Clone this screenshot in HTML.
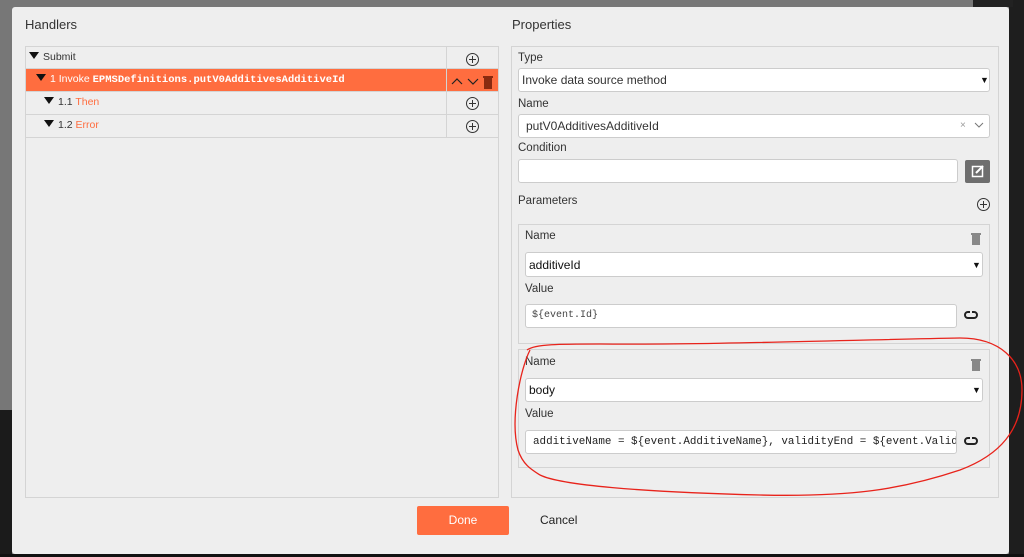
<!DOCTYPE html>
<html><head><style>
*{box-sizing:border-box;margin:0;padding:0}
body{width:1024px;height:557px;overflow:hidden;background:#777;font-family:"Liberation Sans",sans-serif;position:relative;font-size:12px;color:#333}
.abs{position:absolute}
.dlg{left:12px;top:7px;width:997px;height:547px;background:#eee;border-radius:3px}
.box{border:1px solid #d4d4d4}
.inp{background:#fff;border:1px solid #ccc;border-radius:3px}
.lbl{font-size:11.5px;color:#333}
.mono{font-family:"Liberation Mono",monospace}
.tri{display:inline-block;width:0;height:0;border-left:5px solid transparent;border-right:5px solid transparent;border-top:7px solid #111;margin-right:4px;vertical-align:1px}
.plus{width:13px;height:13px;border:1px solid #333;border-radius:50%}
.plus:before{content:"";position:absolute;left:2px;top:5px;width:7px;height:1px;background:#333}
.plus:after{content:"";position:absolute;left:5px;top:2px;width:1px;height:7px;background:#333}
.dd{font-size:9px;color:#111}
</style></head><body>
<div class="abs" style="left:0;top:410px;width:12px;height:147px;background:#1b1b1b"></div>
<div class="abs" style="left:1009px;top:0;width:15px;height:557px;background:#1e1e1e"></div>
<div class="abs" style="left:973px;top:0;width:40px;height:7px;background:#222"></div>
<div class="abs" style="left:0;top:554px;width:1024px;height:3px;background:#111"></div>
<div class="abs dlg"></div>
<div class="abs" style="left:25px;top:17px;font-size:13px">Handlers</div>
<div class="abs" style="left:512px;top:17px;font-size:13px">Properties</div>
<div class="abs box" style="left:25px;top:46px;width:474px;height:452px"></div>
<div class="abs" style="left:446px;top:46px;width:1px;height:91px;background:#d4d4d4"></div>
<div class="abs" style="left:26px;top:68px;width:472px;height:1px;background:#d4d4d4"></div>
<div class="abs" style="left:26px;top:114px;width:472px;height:1px;background:#d4d4d4"></div>
<div class="abs" style="left:26px;top:137px;width:472px;height:1px;background:#d4d4d4"></div>
<div class="abs" style="left:26px;top:91px;width:472px;height:1px;background:#d4d4d4"></div>
<div class="abs" style="left:29px;top:51px;font-size:10.5px"><span class="tri"></span>Submit</div>
<div class="abs plus" style="left:466px;top:53px"></div>
<div class="abs" style="left:26px;top:69px;width:420px;height:22px;background:#ff6d3f"></div>
<div class="abs" style="left:447px;top:69px;width:51px;height:22px;background:#ff6d3f"></div>
<div class="abs" style="left:36px;top:73px;font-size:10.5px;color:#fff"><span class="tri"></span>1 Invoke <span class="mono" style="font-weight:bold;font-size:10.5px">EPMSDefinitions.putV0AdditivesAdditiveId</span></div>
<svg class="abs" style="left:450px;top:74px" width="46" height="16"><path d="M2 10 L7 5 L12 10 M18 5 L23 10 L28 5" stroke="#222" stroke-width="1.2" fill="none"/><rect x="34" y="4" width="8" height="11" fill="#8a2a10"/><rect x="33" y="2" width="10" height="2" fill="#8a2a10"/></svg>
<div class="abs" style="left:44px;top:96px;font-size:10.5px"><span class="tri"></span>1.1 <span style="color:#ff6d3f">Then</span></div>
<div class="abs plus" style="left:466px;top:97px"></div>
<div class="abs" style="left:44px;top:119px;font-size:10.5px"><span class="tri"></span>1.2 <span style="color:#ff6d3f">Error</span></div>
<div class="abs plus" style="left:466px;top:120px"></div>

<div class="abs box" style="left:511px;top:46px;width:488px;height:452px"></div>
<div class="abs lbl" style="left:518px;top:52px">Type</div>
<div class="abs inp" style="left:518px;top:68px;width:472px;height:24px"></div>
<div class="abs" style="left:522px;top:73px;font-size:12px">Invoke data source method</div>
<div class="abs dd" style="left:980px;top:75px">▼</div>
<div class="abs lbl" style="left:518px;top:98px">Name</div>
<div class="abs inp" style="left:518px;top:114px;width:472px;height:24px"></div>
<div class="abs" style="left:526px;top:119px;font-size:12px">putV0AdditivesAdditiveId</div>
<div class="abs" style="left:960px;top:120px;font-size:10px;color:#999">×</div>
<svg class="abs" style="left:974px;top:122px" width="10" height="7"><path d="M1 1 L5 5 L9 1" stroke="#777" fill="none"/></svg>
<div class="abs lbl" style="left:518px;top:142px">Condition</div>
<div class="abs inp" style="left:518px;top:159px;width:440px;height:24px"></div>
<div class="abs" style="left:965px;top:160px;width:25px;height:23px;background:#6e6e6e;border-radius:2px"></div>
<svg class="abs" style="left:971px;top:164px" width="14" height="14"><rect x="1.5" y="2.5" width="10" height="10" fill="none" stroke="#fff" stroke-width="1.5"/><path d="M5 9 L12 2" stroke="#fff" stroke-width="2"/></svg>
<div class="abs lbl" style="left:518px;top:195px">Parameters</div>
<div class="abs plus" style="left:977px;top:198px"></div>

<div class="abs box" style="left:518px;top:224px;width:472px;height:120px"></div>
<div class="abs lbl" style="left:525px;top:230px">Name</div>
<svg class="abs" style="left:971px;top:232px" width="10" height="13"><rect x="1" y="3" width="8" height="10" fill="#888"/><rect x="0" y="1" width="10" height="2" fill="#888"/></svg>
<div class="abs inp" style="left:525px;top:252px;width:458px;height:25px"></div>
<div class="abs" style="left:529px;top:258px;font-size:12px;color:#111">additiveId</div>
<div class="abs dd" style="left:972px;top:260px">▼</div>
<div class="abs lbl" style="left:525px;top:283px">Value</div>
<div class="abs inp" style="left:525px;top:304px;width:432px;height:24px"></div>
<div class="abs mono" style="left:532px;top:310px;font-size:10px;color:#444">${event.Id}</div>
<svg class="abs" style="left:964px;top:310px" width="14" height="10"><path d="M6 2 H4 A3 3 0 0 0 4 8 H7 M8 2 H10 A3 3 0 0 1 10 8 H7" stroke="#222" stroke-width="2" fill="none"/></svg>

<div class="abs box" style="left:518px;top:349px;width:472px;height:119px"></div>
<div class="abs lbl" style="left:525px;top:356px">Name</div>
<svg class="abs" style="left:971px;top:358px" width="10" height="13"><rect x="1" y="3" width="8" height="10" fill="#888"/><rect x="0" y="1" width="10" height="2" fill="#888"/></svg>
<div class="abs inp" style="left:525px;top:378px;width:458px;height:24px"></div>
<div class="abs" style="left:529px;top:383px;font-size:12px;color:#111">body</div>
<div class="abs dd" style="left:972px;top:385px">▼</div>
<div class="abs lbl" style="left:525px;top:408px">Value</div>
<div class="abs inp" style="left:525px;top:430px;width:432px;height:24px;overflow:hidden"><div class="mono" style="padding:5px 0 0 7px;font-size:10.9px;color:#222;white-space:nowrap">additiveName = ${event.AdditiveName}, validityEnd = ${event.ValidityEnd}</div></div>
<svg class="abs" style="left:964px;top:436px" width="14" height="10"><path d="M6 2 H4 A3 3 0 0 0 4 8 H7 M8 2 H10 A3 3 0 0 1 10 8 H7" stroke="#222" stroke-width="2" fill="none"/></svg>

<div class="abs" style="left:417px;top:506px;width:92px;height:29px;background:#ff6d3f;border-radius:2px;color:#fff;font-size:12px;text-align:center;line-height:29px">Done</div>
<div class="abs" style="left:540px;top:513px;font-size:12px;color:#222">Cancel</div>

<svg class="abs" style="left:0;top:0" width="1024" height="557"><path d="M530 350 C 520 370, 510 420, 518 450 C 523 465, 532 470, 540 475 C 560 485, 640 492, 760 495 C 850 497, 900 490, 960 470 C 1000 455, 1022 430, 1022 390 C 1022 360, 1000 338, 960 338 C 850 340, 700 345, 600 344 C 560 344, 535 344, 527 350" stroke="#e8231b" stroke-width="1.3" fill="none"/></svg>
</body></html>
